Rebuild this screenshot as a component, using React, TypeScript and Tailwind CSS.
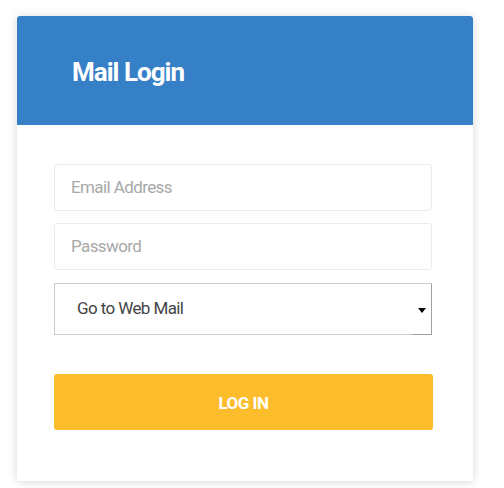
import React from 'react';

export default function App() {
  return (
    <div className="min-h-[488px] w-[504px] bg-white pt-4 pl-[17px]" style={{ fontFamily: 'Roboto, "Noto Sans", sans-serif' }}>
      <div className="w-[456px] rounded-t-[3px] bg-white shadow-[0_1px_10px_rgba(0,0,0,0.16)]">
        <div className="flex h-[109px] items-center rounded-t-[3px] bg-[#3680c7] pl-[55px]">
          <h1 className="pt-[3px] text-[26px] font-bold tracking-[-1px] text-white">Mail Login</h1>
        </div>
        <div className="flex flex-col pl-[37px] pr-[41px] pt-[39px] pb-[51px]">
          <div className="flex h-[47px] items-center rounded-[3px] border border-[#ececec] px-4 text-[17px] tracking-[-0.6px] text-[#a8a8a8]">
            Email Address
          </div>
          <div className="mt-[12px] flex h-[47px] items-center rounded-[3px] border border-[#ececec] px-4 text-[17px] tracking-[-0.6px] text-[#a8a8a8]">
            Password
          </div>
          <div className="relative mt-[13px] flex h-[52px] items-center border border-[#cdcdcd] border-r-[#a0a0a0] pl-[22px] text-[17px] tracking-[-0.6px] text-[#444]">
            Go to Web Mail
            <span className="absolute right-[5px] top-[24px] h-0 w-0 border-x-[4px] border-t-[5px] border-x-transparent border-t-black" />
            <span className="absolute bottom-[-1px] right-[-1px] h-[1px] w-[20px] bg-[#a0a0a0]" />
          </div>
          <button className="mt-[39px] mr-[-1px] flex h-[56px] items-center justify-center rounded-[3px] bg-[#fcbd2d] pt-[3px] text-[17px] font-bold tracking-[-0.5px] text-white">
            LOG IN
          </button>
        </div>
      </div>
    </div>
  );
}
